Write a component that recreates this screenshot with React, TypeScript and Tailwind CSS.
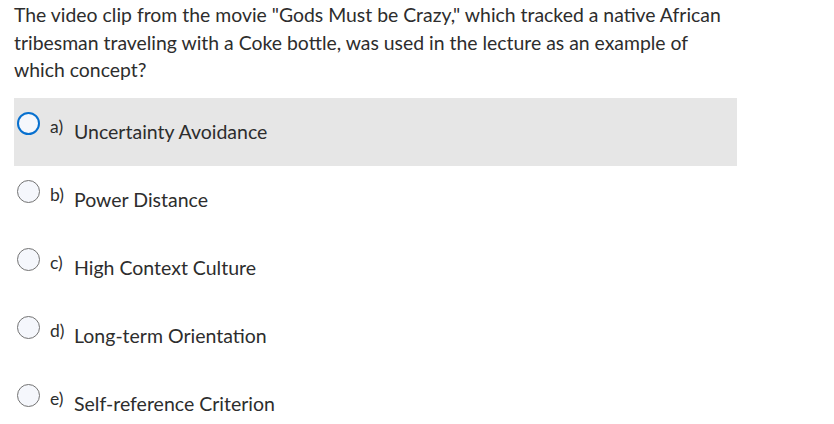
import React from "react";

const options = [
  { k: "a)", t: "Uncertainty Avoidance", active: true },
  { k: "b)", t: "Power Distance" },
  { k: "c)", t: "High Context Culture" },
  { k: "d)", t: "Long-term Orientation" },
  { k: "e)", t: "Self-reference Criterion" },
];

export default function App() {
  return (
    <div
      className="w-[834px] h-[424px] overflow-hidden bg-white text-[#2d2d2d]"
      style={{ fontFamily: "Lato, 'Noto Sans', sans-serif" }}
    >
      <div className="pl-[14px] pr-[97px] pt-[1px]">
        <p className="text-[19.4px] leading-[27.5px]">
          The video clip from the movie "Gods Must be Crazy," which tracked a native African tribesman traveling with a Coke bottle, was used in the lecture as an example of which concept?
        </p>
        <div className="mt-[14px]">
          {options.map((o) => (
            <div
              key={o.k}
              className={`h-[68px] flex items-start pl-[3px] pt-[14px] ${o.active ? "bg-[#e6e6e6]" : ""}`}
            >
              <span
                className={`w-[23px] h-[23px] rounded-full shrink-0 bg-[#f5f7fc] ${o.active ? "border-[2.5px] border-[#0770cf]" : "border border-[#737373]"}`}
              />
              <span className="ml-[10px] text-[17.5px] leading-[22px] mt-[4px] w-[24px]">{o.k}</span>
              <span className="text-[19.5px] leading-[24px] mt-[8px]">{o.t}</span>
            </div>
          ))}
        </div>
      </div>
    </div>
  );
}
